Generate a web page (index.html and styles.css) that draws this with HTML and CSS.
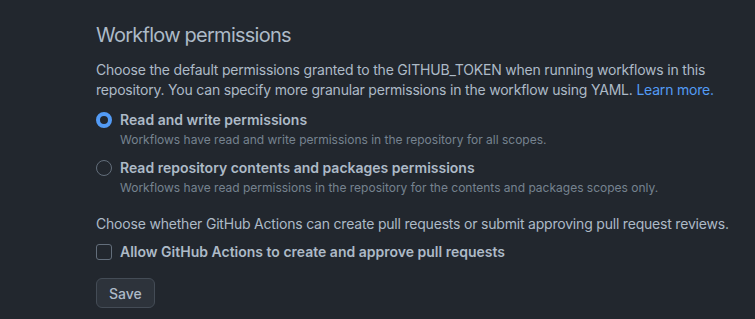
FILE: index.html
```html
<!DOCTYPE html>
<html>
<head>
<meta charset="utf-8">
<link rel="stylesheet" href="styles.css">
</head>
<body>
<div class="page">
  <h2 class="title">Workflow permissions</h2>
  <p class="desc">Choose the default permissions granted to the GITHUB_TOKEN when running workflows in this repository. You can specify more granular permissions in the workflow using YAML. <a class="link" href="#">Learn more.</a></p>
  <div class="options">
    <label class="option">
      <span class="radio checked"></span>
      <span class="option-text">
        <span class="option-label">Read and write permissions</span>
        <span class="option-note">Workflows have read and write permissions in the repository for all scopes.</span>
      </span>
    </label>
    <label class="option">
      <span class="radio"></span>
      <span class="option-text">
        <span class="option-label">Read repository contents and packages permissions</span>
        <span class="option-note">Workflows have read permissions in the repository for the contents and packages scopes only.</span>
      </span>
    </label>
  </div>
  <p class="desc desc2">Choose whether GitHub Actions can create pull requests or submit approving pull request reviews.</p>
  <label class="check-row">
    <span class="checkbox"></span>
    <span class="option-label">Allow GitHub Actions to create and approve pull requests</span>
  </label>
  <button class="btn">Save</button>
</div>
</body>
</html>
```
FILE: styles.css
```css
html, body {
  margin: 0;
  padding: 0;
  background: #22272e;
}
body {
  font-family: Inter, "Liberation Sans", sans-serif;
  color: #adbac7;
}
.page {
  padding: 22px 0 0 96px;
  width: 640px;
}
.title {
  margin: 0;
  font-size: 20px;
  font-weight: 400;
  line-height: 26px;
  letter-spacing: -0.75px;
  color: #adbac7;
}
.desc {
  margin: 12px 0 0;
  font-size: 14px;
  line-height: 20px;
  letter-spacing: -0.2px;
  color: #adbac7;
}
.link {
  color: #539bf5;
  text-decoration: none;
}
.options {
  margin-top: 10px;
  display: flex;
  flex-direction: column;
  gap: 8px;
}
.option {
  display: flex;
  gap: 8px;
  align-items: flex-start;
}
.radio {
  box-sizing: border-box;
  width: 16px;
  height: 16px;
  border-radius: 50%;
  border: 1px solid #636e7b;
  margin-top: 2px;
  flex: none;
}
.radio.checked {
  border: 4px solid #539bf5;
}
.option-text {
  display: flex;
  flex-direction: column;
}
.option-label {
  font-size: 14px;
  font-weight: 600;
  line-height: 20px;
  color: #adbac7;
}
.option-note {
  font-size: 12px;
  line-height: 20px;
  color: #768390;
}
.desc2 {
  margin-top: 16px;
}
.check-row {
  margin-top: 8px;
  display: flex;
  gap: 8px;
  align-items: center;
}
.checkbox {
  box-sizing: border-box;
  width: 16px;
  height: 16px;
  border-radius: 3px;
  border: 1px solid #636e7b;
  flex: none;
}
.btn {
  margin-top: 16px;
  display: block;
  font-family: inherit;
  font-size: 14px;
  font-weight: 500;
  color: #adbac7;
  background: #2d333b;
  border: 1px solid #444c56;
  border-radius: 6px;
  padding: 0 12px;
  height: 30px;
}
```
